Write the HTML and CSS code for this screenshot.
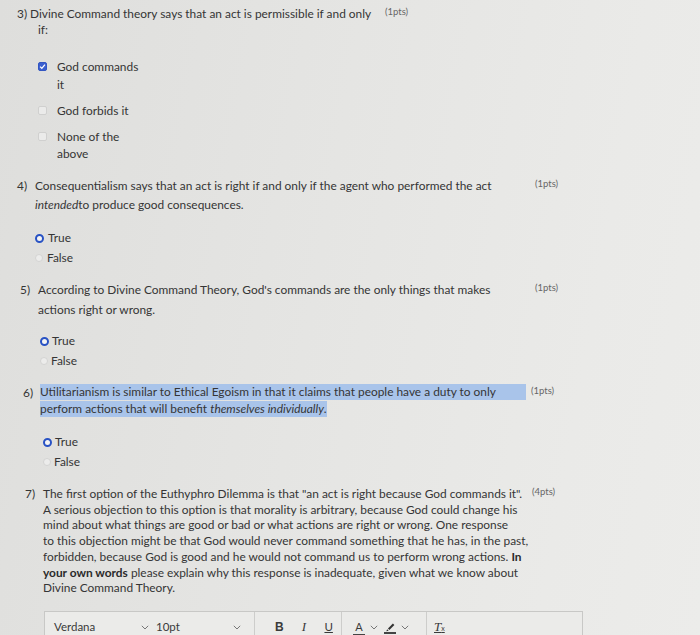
FILE: index.html
```html
<!DOCTYPE html>
<html>
<head>
<meta charset="utf-8">
<link rel="stylesheet" href="styles.css">
</head>
<body>
<div class="page">

  <section class="q q3">
    <div class="qhead">
      <span class="num">3)</span>
      <div class="qtext">Divine Command theory says that an act is permissible if and only<br><span class="indent">if:</span></div>
      <span class="pts">(1pts)</span>
    </div>
    <ul class="opts checks">
      <li class="opt"><span class="cb on"><svg viewBox="0 0 10 10" width="7" height="7"><polyline points="1.5,5.2 4,7.6 8.5,2.2" fill="none" stroke="#fff" stroke-width="1.8"/></svg></span><span class="lbl">God commands<br>it</span></li>
      <li class="opt"><span class="cb"></span><span class="lbl">God forbids it</span></li>
      <li class="opt"><span class="cb"></span><span class="lbl">None of the<br>above</span></li>
    </ul>
  </section>

  <section class="q q4">
    <div class="qhead">
      <span class="num">4)</span>
      <div class="qtext">Consequentialism says that an act is right if and only if the agent who performed the act<br><em>intended</em>to produce good consequences.</div>
      <span class="pts">(1pts)</span>
    </div>
    <ul class="opts radios">
      <li class="opt"><span class="rd on"></span><span class="lbl">True</span></li>
      <li class="opt"><span class="rd"></span><span class="lbl">False</span></li>
    </ul>
  </section>

  <section class="q q5">
    <div class="qhead">
      <span class="num">5)</span>
      <div class="qtext">According to Divine Command Theory, God's commands are the only things that makes<br>actions right or wrong.</div>
      <span class="pts">(1pts)</span>
    </div>
    <ul class="opts radios">
      <li class="opt"><span class="rd on"></span><span class="lbl">True</span></li>
      <li class="opt"><span class="rd"></span><span class="lbl">False</span></li>
    </ul>
  </section>

  <section class="q q6">
    <div class="qhead">
      <span class="num">6)</span>
      <div class="qtext">
        <div class="hl-line"><span class="hl full">Utilitarianism is similar to Ethical Egoism in that it claims that people have a duty to only</span></div>
        <div class="hl-line"><span class="hl">perform actions that will benefit <em>themselves individually</em>.</span></div>
      </div>
      <span class="pts">(1pts)</span>
    </div>
    <ul class="opts radios">
      <li class="opt"><span class="rd on"></span><span class="lbl">True</span></li>
      <li class="opt"><span class="rd"></span><span class="lbl">False</span></li>
    </ul>
  </section>

  <section class="q q7">
    <div class="qhead">
      <span class="num">7)</span>
      <div class="qtext">The first option of the Euthyphro Dilemma is that "an act is right because God commands it".<br>A serious objection to this option is that morality is arbitrary, because God could change his<br>mind about what things are good or bad or what actions are right or wrong. One response<br>to this objection might be that God would never command something that he has, in the past,<br>forbidden, because God is good and he would not command us to perform wrong actions. <strong>In</strong><br><strong>your own words</strong> please explain why this response is inadequate, given what we know about<br>Divine Command Theory.</div>
      <span class="pts">(4pts)</span>
    </div>

    <div class="toolbar">
      <div class="tgroup fonts">
        <span class="tsel fam">Verdana</span>
        <svg class="chev" viewBox="0 0 8 5" width="8" height="5"><polyline points="0.8,0.8 4,4 7.2,0.8" fill="none" stroke="#777" stroke-width="1"/></svg>
        <span class="tsel size">10pt</span>
        <svg class="chev" viewBox="0 0 8 5" width="8" height="5"><polyline points="0.8,0.8 4,4 7.2,0.8" fill="none" stroke="#777" stroke-width="1"/></svg>
      </div>
      <div class="tgroup marks">
        <span class="tb b">B</span>
        <span class="tb i">I</span>
        <span class="tb u">U</span>
      </div>
      <div class="tgroup colors">
        <span class="tb a">A<span class="bar"></span></span>
        <svg class="chev" viewBox="0 0 8 5" width="8" height="5"><polyline points="0.8,0.8 4,4 7.2,0.8" fill="none" stroke="#777" stroke-width="1"/></svg>
        <span class="tb pen"><svg viewBox="0 0 12 12" width="11" height="11"><path d="M3.2 8.2 L8.6 2.8 L10.2 4.4 L4.8 9.8 Z" fill="#333"/><path d="M2.4 9 L4 10.6 L1.4 11.2 Z" fill="#333"/></svg><span class="bar"></span></span>
        <svg class="chev" viewBox="0 0 8 5" width="8" height="5"><polyline points="0.8,0.8 4,4 7.2,0.8" fill="none" stroke="#777" stroke-width="1"/></svg>
      </div>
      <div class="tgroup clear">
        <span class="tb tx">T<sub>x</sub></span>
      </div>
    </div>
  </section>

</div>
</body>
</html>
```

FILE: styles.css
```css
html, body {
  margin: 0;
  padding: 0;
}

body {
  width: 700px;
  height: 635px;
  overflow: hidden;
  background: linear-gradient(100deg, #dededc 0%, #e5e5e3 45%, #eaeae8 80%, #ececea 100%);
  font-family: Lato, "Open Sans", "Liberation Sans", sans-serif;
  font-size: 11.9px;
  color: #353535;
}

.page {
  display: flex;
  flex-direction: column;
}

.qhead {
  display: flex;
  align-items: flex-start;
}

.num {
  flex: none;
}

.qtext {
  flex: none;
}

.pts {
  flex: none;
  font-size: 9.5px;
  color: #666;
  position: relative;
  top: -2px;
}

.indent {
  padding-left: 8px;
}

em {
  font-style: italic;
}

strong {
  font-weight: 700;
  color: #2a2a2a;
}

.opts {
  list-style: none;
  margin: 0;
  padding: 0;
  display: flex;
  flex-direction: column;
}

.opt {
  display: flex;
  align-items: flex-start;
}

/* checkboxes */
.cb {
  flex: none;
  width: 9px;
  height: 9px;
  box-sizing: border-box;
  border: 1px solid #d0d0cf;
  border-radius: 2px;
  background: #ebebea;
  margin-top: 4px;
  display: flex;
  align-items: center;
  justify-content: center;
}

.cb.on {
  background: #3b5fcf;
  border-color: #3356c2;
}

/* radios */
.rd {
  flex: none;
  width: 8px;
  height: 8px;
  box-sizing: border-box;
  border: 1px solid #d4d4d3;
  border-radius: 50%;
  background: #ececeb;
  margin-top: 6px;
}

.rd.on {
  border: 2.5px solid #2852c4;
  background: #f4f4f4;
  width: 9px;
  height: 9px;
  margin-top: 5.5px;
}

/* question 3 */
.q3 {
  padding-top: 6px;
  padding-left: 17px;
}
.q3 .qhead { line-height: 15.5px; }
.q3 .num { width: 13px; }
.q3 .qtext { width: 355px; }
.q3 .opts {
  margin-top: 21px;
  padding-left: 21px;
  gap: 8.5px;
}
.q3 .opt { line-height: 17.5px; }
.q3 .lbl { margin-left: 10px; }

/* question 4 */
.q4 {
  margin-top: 13px;
  padding-left: 17px;
}
.q4 .qhead { line-height: 19.5px; }
.q4 .num { width: 18px; }
.q4 .qtext { width: 500px; }
.q4 .opts {
  margin-top: 13.5px;
  padding-left: 18px;
}
.q4 .opt { line-height: 20px; }
.q4 .lbl { margin-left: 4px; }

/* question 5 */
.q5 {
  margin-top: 12px;
  padding-left: 20px;
}
.q5 .qhead { line-height: 20px; }
.q5 .num { width: 18px; }
.q5 .qtext { width: 497px; }
.q5 .opts {
  margin-top: 11px;
  padding-left: 20px;
}
.q5 .opt { line-height: 20px; }
.q5 .lbl { margin-left: 3px; }

/* question 6 */
.q6 {
  margin-top: 12.5px;
  padding-left: 23px;
}
.q6 .qhead { line-height: 17px; }
.q6 .num { width: 17px; }
.q6 .qtext { width: 491px; }
.hl-line {
  height: 17px;
  display: flex;
  align-items: center;
}
.hl {
  display: inline-block;
  background: #a9c4ea;
  height: 15.5px;
  line-height: 15.5px;
}
.hl.full { width: 486px; }
.q6 .opts {
  margin-top: 14.5px;
  padding-left: 20px;
}
.q6 .opt { line-height: 19.5px; }
.q6 .lbl { margin-left: 3px; }

/* question 7 */
.q7 {
  margin-top: 15px;
  padding-left: 25px;
}
.q7 .qhead { line-height: 15.7px; }
.q7 .num { width: 18px; }
.q7 .qtext { width: 489px; }

/* toolbar */
.toolbar {
  margin-top: 15px;
  margin-left: 19px;
  width: 539px;
  height: 36px;
  box-sizing: border-box;
  border: 1px solid #c8c8c6;
  border-bottom: none;
  background: #ebebe9;
  display: flex;
  align-items: stretch;
  font-family: Lato, "Open Sans", sans-serif;
  font-size: 11.5px;
  color: #3a3a3a;
  line-height: 14px;
}

.tgroup {
  box-sizing: border-box;
  display: flex;
  align-items: flex-start;
  border-right: 1px solid #cdcdcb;
  padding-top: 8px;
}
.tgroup .chev { margin-top: 5px; }

.fonts {
  width: 210px;
  padding-left: 9px;
}
.fam { width: 87px; }
.fonts .chev { margin-right: 7px; }
.size { width: 77px; }

.marks {
  width: 87px;
  padding-left: 12px;
}
.marks .tb { width: 28px; }

.colors {
  width: 85px;
  padding-left: 11px;
}
.colors .chev { margin-left: 5px; margin-right: 6px; }

.clear {
  border-right: none;
  padding-left: 7px;
}

.tb {
  display: inline-flex;
  flex-direction: column;
  align-items: center;
  font-size: 12.5px;
}
.tb.b { font-weight: 700; font-family: "Liberation Sans", sans-serif; font-size: 12px; }
.tb.i { font-family: "Liberation Serif", serif; font-style: italic; font-size: 13px; }
.tb.u { text-decoration: underline; font-size: 11.5px; }
.tb.a { font-size: 11px; }
.tb.pen { padding-top: 1px; }
.tb .bar {
  display: block;
  width: 12px;
  height: 2px;
  background: #444;
}
.tb.tx {
  font-family: "Liberation Serif", serif;
  font-style: italic;
  font-size: 13px;
  text-decoration: underline;
  flex-direction: row;
  align-items: baseline;
}
.tb.tx sub {
  font-size: 7px;
  font-style: normal;
  font-family: Lato, sans-serif;
  vertical-align: baseline;
}
```
